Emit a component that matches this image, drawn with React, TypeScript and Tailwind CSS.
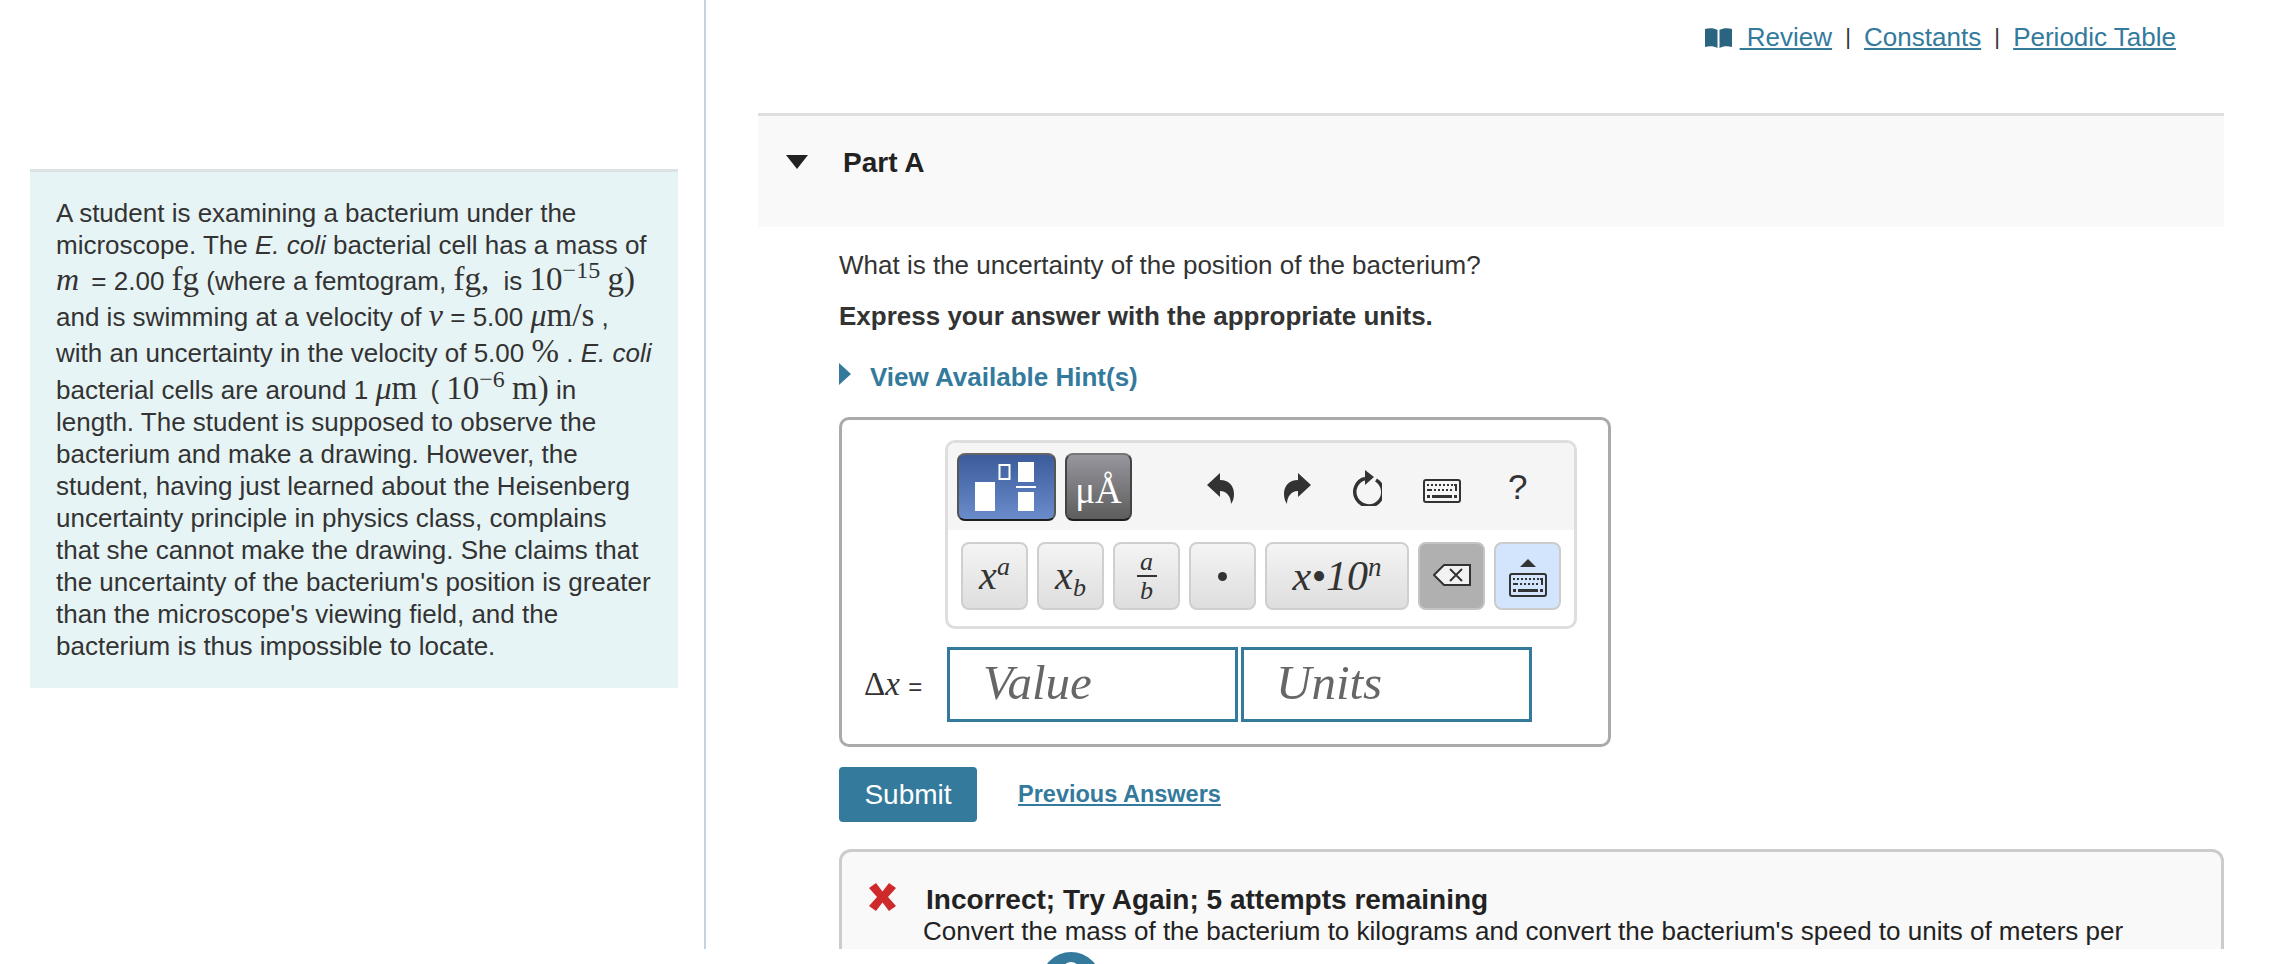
import { ReactNode } from "react";

const serif = "font-['Liberation_Serif',serif]";

function Mi({ children }: { children: ReactNode }) {
  return <span className={`${serif} italic text-[32px] leading-[20px]`}>{children}</span>;
}

function Mr({ children }: { children: ReactNode }) {
  return <span className={`${serif} text-[33px] leading-[20px]`}>{children}</span>;
}

function Sup({ children }: { children: ReactNode }) {
  return <sup className={`${serif} text-[24px] leading-[20px] relative -top-[12px] align-baseline`}>{children}</sup>;
}

function Keyboard({ className }: { className?: string }) {
  return (
    <svg viewBox="0 0 38 24" className={className}>
      <rect x="1" y="1" width="36" height="22" rx="2" fill="none" stroke="currentColor" strokeWidth="2" />
      <path d="M4 5h2v2H4zM8 5h2v2H8zM12 5h2v2h-2zM16 5h2v2h-2zM20 5h2v2h-2zM24 5h2v2h-2zM28 5h2v2h-2zM4 10h5v2H4zM11 10h2v2h-2zM15 10h2v2h-2zM19 10h2v2h-2zM23 10h2v2h-2zM27 10h2v2h-2zM31 5h3v7h-2V7h-1zM4 16h3v3H4zM9 16h20v3H9zM31 16h3v3h-3z" fill="currentColor" />
    </svg>
  );
}

function KeyButton({ width, children }: { width: string; children: ReactNode }) {
  return (
    <div className={`${width} h-[68px] shrink-0 flex items-center justify-center rounded-[8px] border-2 border-[#cfcfcf] bg-gradient-to-b from-[#f4f4f4] to-[#dedede] text-[#333]`}>
      {children}
    </div>
  );
}

export default function App() {
  return (
    <div className="relative h-[964px] overflow-hidden bg-white font-['Liberation_Sans',sans-serif] text-[26px] text-[#333]">
      <div className="flex h-[949px] overflow-hidden">
        {/* left panel */}
        <div className="w-[706px] shrink-0 border-r-2 border-[#c5d3e0] pl-[30px] pt-[169px]">
          <div className="w-[648px] h-[519px] border-t-[3px] border-[#dde3e5] bg-[#e7f4f5] pl-[26px] pt-[25px] leading-[32px] whitespace-nowrap">
            <div>A student is examining a bacterium under the</div>
            <div>
              microscope. The <i>E. coli</i> bacterial cell has a mass of
            </div>
            <div className="h-[37px] leading-[41px]">
              <span className="mr-[5px]">
                <Mi>m</Mi>
              </span>{" "}
              = 2.00 <Mr>fg</Mr> (where a femtogram, <Mr>fg,</Mr>&nbsp; is <Mr>10</Mr>
              <Sup>−15</Sup> <Mr>g)</Mr>
            </div>
            <div className="h-[35px] leading-[38px]">
              and is swimming at a velocity of <Mi>v</Mi> = 5.00 <Mi>μ</Mi>
              <Mr>m/s</Mr> ,
            </div>
            <div className="h-[37px] leading-[41px]">
              with an uncertainty in the velocity of 5.00 <Mr>%</Mr> . <i>E. coli</i>
            </div>
            <div className="h-[36px] leading-[41px]">
              bacterial cells are around 1 <Mi>μ</Mi>
              <span className="mr-[6px]">
                <Mr>m</Mr>
              </span>{" "}
              ( <Mr>10</Mr>
              <Sup>−6</Sup> <Mr>m)</Mr> in
            </div>
            <div>length. The student is supposed to observe the</div>
            <div>bacterium and make a drawing. However, the</div>
            <div>student, having just learned about the Heisenberg</div>
            <div>uncertainty principle in physics class, complains</div>
            <div>that she cannot make the drawing. She claims that</div>
            <div>the uncertainty of the bacterium's position is greater</div>
            <div>than the microscope's viewing field, and the</div>
            <div>bacterium is thus impossible to locate.</div>
          </div>
        </div>

        {/* right column */}
        <div className="flex-1 min-w-0 pl-[52px] pr-[70px]">
          <div className="h-[113px] pt-[20px] pr-[48px] flex justify-end items-start leading-[34px] text-[#337a9c]">
            <svg viewBox="0 0 27 20" className="w-[27px] h-[20px] mt-[8px] text-[#2a6480]">
              <path d="M0 1c4-1 9-1 12.5 1v18C9 18 4 18 0 19zM27 1c-4-1-9-1-12.5 1v18c3.500-2 8.500-2 12.500-1z" fill="currentColor" />
            </svg>
            <a className="underline ml-[8px]">&nbsp;Review</a>
            <span className="text-[#333] text-[22px] w-[32px] text-center">|</span>
            <a className="underline">Constants</a>
            <span className="text-[#333] text-[22px] w-[32px] text-center">|</span>
            <a className="underline">Periodic Table</a>
          </div>

          <div className="h-[114px] border-t-[3px] border-[#dfdfdf] bg-[#f9f9f9] pl-[28px] pt-[31px] flex items-start">
            <svg viewBox="0 0 22 14" className="w-[22px] h-[14px] mt-[8px] text-[#222]">
              <path d="M0 0h22L11 14z" fill="currentColor" />
            </svg>
            <div className="ml-[35px] text-[28px] leading-[32px] font-bold text-[#222]">Part A</div>
          </div>

          <div className="pl-[81px]">
            <p className="mt-[21px] leading-[34px]">What is the uncertainty of the position of the bacterium?</p>
            <p className="mt-[17px] leading-[34px] font-bold">Express your answer with the appropriate units.</p>
            <div className="mt-[27px] h-[34px] flex items-center font-bold text-[#337a9c]">
              <svg viewBox="0 0 12 22" className="w-[12px] h-[22px] -mt-[6px]">
                <path d="M0 0l12 11L0 22z" fill="currentColor" />
              </svg>
              <span className="ml-[19px]">View Available Hint(s)</span>
            </div>

            {/* answer box */}
            <div className="mt-[23px] w-[772px] h-[330px] rounded-[10px] border-[3px] border-[#aaaaaa] pl-[103px] pt-[20px]">
              <div className="w-[632px] h-[189px] rounded-[10px] border-[3px] border-[#dedede] overflow-hidden bg-white">
                <div className="h-[87px] bg-[#f5f5f5] flex items-start pt-[10px] pl-[9px]">
                  <div className="w-[99px] h-[68px] rounded-[8px] border-2 border-t-[#666] border-x-[#555] border-b-[#1d1d1d] bg-gradient-to-b from-[#3c5c9b] to-[#6a8ccb] flex items-center justify-center">
                    <svg viewBox="0 0 64 50" className="w-[64px] h-[50px]">
                      <rect x="0" y="20" width="20" height="29" fill="#fff" />
                      <rect x="24.500" y="3" width="10" height="14" fill="none" stroke="#fff" strokeWidth="2" />
                      <rect x="43" y="0" width="16" height="20" fill="#fff" />
                      <rect x="41" y="24" width="20" height="2" fill="#fff" />
                      <rect x="43" y="30" width="16" height="19" fill="#fff" />
                    </svg>
                  </div>
                  <div className={`ml-[9px] w-[67px] h-[68px] rounded-[8px] border-2 border-t-[#777] border-x-[#444] border-b-[#1d1d1d] bg-gradient-to-b from-[#98969e] to-[#5e5e5e] flex items-end justify-center pb-[8px] text-white text-[37px] leading-[40px] ${serif}`}>
                    μÅ
                  </div>
                  <div className="flex items-center text-[#333] ml-[75px] h-[70px]">
                    <svg viewBox="0 0 27 31" className="w-[27px] h-[31px]">
                      <path d="M0 12L13 0v7c9 0 14 6 14 14 0 4-1 7-3 10 0-7-4-13-11-13v6z" fill="currentColor" />
                    </svg>
                    <svg viewBox="0 0 27 31" className="w-[27px] h-[31px] ml-[50px]">
                      <path d="M27 12L14 0v7C5 7 0 13 0 21c0 4 1 7 3 10 0-7 4-13 11-13v6z" fill="currentColor" />
                    </svg>
                    <svg viewBox="0 0 33 36" className="w-[33px] h-[36px] ml-[38px]">
                      <path d="M27 9a14 14 0 1 1-11-1.500" fill="none" stroke="currentColor" strokeWidth="3.500" transform="translate(0 1)" />
                      <path d="M16 0l9 7-9 8z" fill="currentColor" />
                    </svg>
                    <Keyboard className="w-[38px] h-[24px] ml-[41px] mt-[6px]" />
                    <span className="ml-[47px] text-[35px] leading-[32px] -mt-[3px]">?</span>
                  </div>
                </div>
                <div className="flex gap-[9px] pl-[13px] pt-[12px]">
                  <KeyButton width="w-[67px]">
                    <span className={`${serif} italic text-[40px]`}>
                      x<sup className="text-[26px] align-baseline relative -top-[14px]">a</sup>
                    </span>
                  </KeyButton>
                  <KeyButton width="w-[67px]">
                    <span className={`${serif} italic text-[40px]`}>
                      x<sub className="text-[26px] align-baseline relative top-[7px]">b</sub>
                    </span>
                  </KeyButton>
                  <KeyButton width="w-[67px]">
                    <span className={`${serif} italic text-[26px] leading-[27px] flex flex-col items-center`}>
                      <span>a</span>
                      <span className="w-[20px] h-[2px] bg-[#333]" />
                      <span>b</span>
                    </span>
                  </KeyButton>
                  <KeyButton width="w-[67px]">
                    <span className="w-[9px] h-[9px] rounded-full bg-[#333]" />
                  </KeyButton>
                  <KeyButton width="w-[144px]">
                    <span className={`${serif} italic text-[42px]`}>
                      x•10<sup className="text-[27px] align-baseline relative -top-[14px]">n</sup>
                    </span>
                  </KeyButton>
                  <div className="w-[67px] h-[68px] shrink-0 rounded-[8px] border-2 border-[#c4c4c4] bg-[#b0b0b0] flex items-center justify-center text-[#333]">
                    <svg viewBox="0 0 38 22" className="w-[38px] h-[22px] -mt-[2px]">
                      <path d="M1 11L11 1h26v20H11z" fill="#f2f2f2" stroke="currentColor" strokeWidth="2" />
                      <path d="M17 5l12 12M29 5L17 17" stroke="currentColor" strokeWidth="2" />
                    </svg>
                  </div>
                  <div className="w-[67px] h-[68px] shrink-0 rounded-[8px] border-2 border-[#cccccc] bg-[#d3e5fc] flex flex-col items-center pt-[15px] text-[#333]">
                    <svg viewBox="0 0 16 8" className="w-[16px] h-[8px]">
                      <path d="M8 0l8 8H0z" fill="currentColor" />
                    </svg>
                    <Keyboard className="w-[38px] h-[24px] mt-[6px]" />
                  </div>
                </div>
              </div>

              <div className="flex items-center mt-[18px] -ml-[81px]">
                <div className={`w-[83px] ${serif} text-[33px] whitespace-nowrap`}>
                  Δ<i>x</i> <span className="font-['Liberation_Sans',sans-serif] text-[24px]">=</span>
                </div>
                <div className={`w-[291px] h-[75px] border-[3px] border-[#337a9c] pl-[33px] ${serif} italic text-[49px] leading-[66px] text-[#666]`}>Value</div>
                <div className={`ml-[3px] w-[291px] h-[75px] border-[3px] border-[#337a9c] pl-[32px] ${serif} italic text-[49px] leading-[66px] text-[#666]`}>Units</div>
              </div>
            </div>

            <div className="mt-[20px] flex items-center">
              <div className="w-[138px] h-[55px] rounded-[4px] bg-[#337a9c] text-white text-[28px] flex items-center justify-center">Submit</div>
              <a className="ml-[41px] underline font-bold text-[23.5px] text-[#337a9c]">Previous Answers</a>
            </div>

            <div className="mt-[27px] h-[200px] rounded-t-[12px] border-[3px] border-[#cccccc] bg-[#f9f9f9] pl-[27px] pt-[31px] text-[#222]">
              <div className="flex items-center">
                <svg viewBox="0 0 27 28" className="w-[27px] h-[28px] -mt-[6px]">
                  <path d="M7 0l6.500 8.500L20 0l7 5-8 9 8 9-7 5-6.500-8.500L7 28l-7-5 8-9-8-9z" fill="#cf2a2b" />
                </svg>
                <span className="ml-[30px] font-bold text-[28px] leading-[34px]">Incorrect; Try Again; 5 attempts remaining</span>
              </div>
              <p className="ml-[54px] -mt-[2px] leading-[32px] whitespace-nowrap">Convert the mass of the bacterium to kilograms and convert the bacterium's speed to units of meters per</p>
            </div>
          </div>
        </div>
      </div>

      {/* floating help button, mostly off the bottom of the page */}
      <div className="absolute left-[1041px] top-[952px] w-[60px] h-[60px] rounded-full bg-[#337a9c] flex justify-center pt-[10px]">
        <span className="w-[18px] h-[18px] rounded-full bg-white" />
      </div>
    </div>
  );
}
